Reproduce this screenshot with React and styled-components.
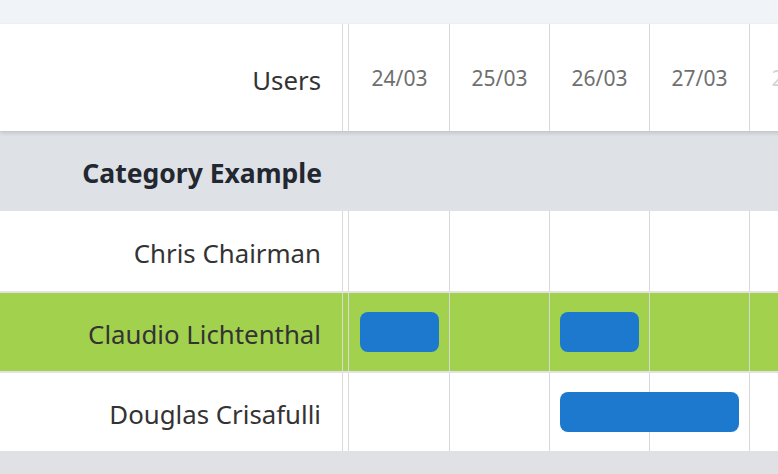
import React from 'react';
import styled, { createGlobalStyle } from 'styled-components';

const GlobalStyle = createGlobalStyle`
  html, body {
    margin: 0;
    padding: 0;
    background: #dfe1e5;
    overflow: hidden;
  }
  body {
    font-family: "Noto Sans", "Open Sans", sans-serif;
  }
`;

const TopBand = styled.div`
  height: 24px;
  background: #f0f4f8;
`;

const Table = styled.div`
  width: 850px;
`;

const Row = styled.div`
  display: flex;
  height: ${(p) => p.height || 80}px;
  background: ${(p) => p.bg || '#ffffff'};
  border-top: ${(p) => (p.divided ? '2px solid #e2e2e2' : 'none')};
  box-sizing: border-box;
`;

const HeaderRow = styled(Row)`
  position: relative;
  z-index: 1;
  box-shadow: 0 2px 4px rgba(0, 0, 0, 0.14);
`;

const NameCell = styled.div`
  width: 343px;
  flex: none;
  box-sizing: border-box;
  display: flex;
  align-items: center;
  justify-content: flex-end;
  padding: 4px 21px 0 0;
  border-right: ${(p) => (p.lined ? '1px solid #dadada' : 'none')};
  font-size: ${(p) => (p.bold ? 26.5 : 25.8)}px;
  font-weight: ${(p) => (p.bold ? 700 : 400)};
  color: ${(p) => (p.bold ? '#222730' : '#333333')};
  white-space: nowrap;
`;

const Gap = styled.div`
  width: 5px;
  flex: none;
  border-right: 1px solid #dadada;
`;

const Days = styled.div`
  display: grid;
  grid-template-columns: repeat(5, 100px);
  grid-template-rows: 100%;
  flex: none;
  padding-left: 1px;
`;

const DayCell = styled.div`
  grid-row: 1;
  grid-column: ${(p) => p.col};
  border-right: 1px solid #d8d8d8;
  display: flex;
  align-items: center;
  justify-content: center;
  font-size: 21px;
  color: ${(p) => (p.faded ? '#d4d4d4' : '#6f6f6f')};
  white-space: nowrap;
  overflow: hidden;
`;

const Bar = styled.div`
  grid-row: 1;
  grid-column: ${(p) => p.from} / ${(p) => p.to};
  align-self: center;
  height: 40px;
  margin: 0 11px 0 10px;
  border-radius: 8px;
  background: #1c79cd;
  z-index: 1;
`;

const Category = styled.div`
  height: 80px;
  background: #dee1e6;
  display: flex;
`;

const dates = ['24/03', '25/03', '26/03', '27/03', '28/03'];

const users = [
  { name: 'Chris Chairman', bars: [] },
  { name: 'Claudio Lichtenthal', bg: '#a2d14e', bars: [[1, 2], [3, 4]] },
  { name: 'Douglas Crisafulli', bars: [[3, 5]] },
];

const App = () => (
  <>
    <GlobalStyle />
    <TopBand />
    <Table>
      <HeaderRow height={107}>
        <NameCell lined>Users</NameCell>
        <Gap />
        <Days>
          {dates.map((d, i) => (
            <DayCell key={d} col={i + 1} faded={i === 4}>
              {d}
            </DayCell>
          ))}
        </Days>
      </HeaderRow>
      <Category>
        <NameCell bold>Category Example</NameCell>
      </Category>
      {users.map((u, idx) => (
        <Row key={u.name} bg={u.bg} divided={idx > 0}>
          <NameCell lined>{u.name}</NameCell>
          <Gap />
          <Days>
            {dates.map((d, i) => (
              <DayCell key={d} col={i + 1} />
            ))}
            {u.bars.map(([from, to]) => (
              <Bar key={from} from={from} to={to} />
            ))}
          </Days>
        </Row>
      ))}
    </Table>
  </>
);

export default App;
